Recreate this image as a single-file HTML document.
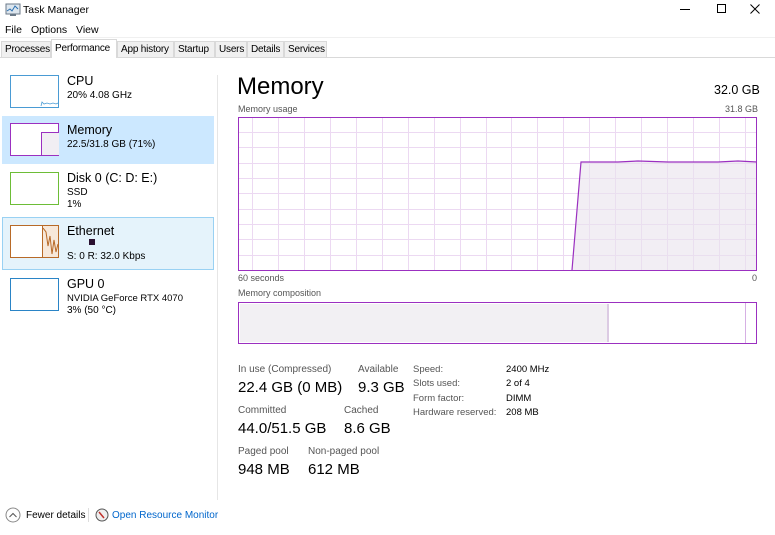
<!DOCTYPE html>
<html><head><meta charset="utf-8"><style>
*{margin:0;padding:0;box-sizing:border-box}
body{width:775px;height:535px;background:#fff;font-family:"Liberation Sans",sans-serif;color:#000;position:relative;overflow:hidden;font-size:10.5px}
.a{position:absolute;white-space:nowrap}
.tab{position:absolute;top:41px;height:16px;border:1px solid #d9d9d9;border-bottom:none;background:#f0f0f0;font-size:10px;padding:2px 0 0 3px;white-space:nowrap;overflow:hidden;letter-spacing:-0.2px}
.big{font-size:15px}
.lbl{font-size:10px;color:#555}
.th{position:absolute;left:10px;width:49px;height:33px;border:1px solid}
</style></head><body>
<svg class="a" style="left:5px;top:3px" width="16" height="14"><rect x="1" y="1" width="14" height="10" fill="#dde6ee" stroke="#6b7a89"/><polyline points="2,8 5,6 7,8 10,3 13,6" fill="none" stroke="#2a6fb0"/><rect x="5" y="11" width="6" height="2" fill="#6b7a89"/></svg>
<div class="a" style="left:23px;top:4px;font-size:10.5px">Task Manager</div>
<div class="a" style="left:680px;top:9px;width:10px;height:1px;background:#000"></div>
<div class="a" style="left:717px;top:4px;width:9px;height:9px;border:1px solid #000"></div>
<svg class="a" style="left:750px;top:4px" width="10" height="10"><path d="M0.5 0.5L9.5 9.5M9.5 0.5L0.5 9.5" stroke="#000"/></svg>
<div class="a" style="left:5px;top:24px">File</div>
<div class="a" style="left:31px;top:24px">Options</div>
<div class="a" style="left:76px;top:24px">View</div>
<div class="a" style="left:0;top:37px;width:775px;height:1px;background:#f0f0f0"></div>
<div class="a" style="left:0;top:57px;width:775px;height:1px;background:#d9d9d9"></div>
<div class="tab" style="left:1px;width:50px">Processes</div>
<div class="tab" style="left:51px;top:39px;height:19px;width:66px;background:#fff;padding-top:3px">Performance</div>
<div class="tab" style="left:117px;width:57px">App history</div>
<div class="tab" style="left:174px;width:41px">Startup</div>
<div class="tab" style="left:215px;width:32px">Users</div>
<div class="tab" style="left:247px;width:37px">Details</div>
<div class="tab" style="left:284px;width:43px">Services</div>

<div class="a" style="left:217px;top:75px;width:1px;height:425px;background:#e6e6e6"></div>
<div class="th" style="top:75px;border-color:#4a9bd4"><svg width="47" height="31"><polyline points="30,30 31,26 33,28 36,27 39,28 42,27 45,28 47,27" fill="none" stroke="#4a9bd4" stroke-width="0.8"/></svg></div>
<div class="a" style="left:67px;top:74px;font-size:12.5px">CPU</div>
<div class="a" style="left:67px;top:90px;font-size:10px">20% 4.08 GHz</div>
<div class="a" style="left:2px;top:116px;width:212px;height:48px;background:#cce8ff"></div>
<div class="th" style="top:123px;border-color:#9b30c0;background:#fff"><div style="position:absolute;left:30px;top:8px;width:18px;height:23px;background:#f1eef3;border-left:1px solid #9b30c0;border-top:1px solid #9b30c0"></div></div>
<div class="a" style="left:67px;top:123px;font-size:12.5px">Memory</div>
<div class="a" style="left:67px;top:139px;font-size:10px">22.5/31.8 GB (71%)</div>
<div class="th" style="top:172px;border-color:#6dbd37"></div>
<div class="a" style="left:67px;top:171px;font-size:12.5px">Disk 0 (C: D: E:)</div>
<div class="a" style="left:67px;top:187px;font-size:10px">SSD</div>
<div class="a" style="left:67px;top:199px;font-size:10px">1%</div>
<div class="a" style="left:2px;top:217px;width:212px;height:53px;background:#e5f3fb;border:1px solid #99d1f3"></div>
<div class="th" style="top:225px;border-color:#b86a28;background:#fff"><div style="position:absolute;left:31px;top:0;width:16px;height:31px;background:#f7e8da;border-left:1px solid #b86a28"></div><svg class="a" style="left:32px;top:0" width="15" height="31"><polyline points="0,2 3,6 5,20 7,10 9,28 11,14 13,26 15,18" fill="none" stroke="#b86a28"/></svg></div>
<div class="a" style="left:67px;top:224px;font-size:12.5px">Ethernet</div>
<div class="a" style="left:89px;top:239px;width:6px;height:6px;background:#2a1030"></div>
<div class="a" style="left:67px;top:251px;font-size:10px">S: 0 R: 32.0 Kbps</div>
<div class="th" style="top:278px;border-color:#2a84c6"></div>
<div class="a" style="left:67px;top:277px;font-size:12.5px">GPU 0</div>
<div class="a" style="left:67px;top:293px;font-size:9.5px">NVIDIA GeForce RTX 4070</div>
<div class="a" style="left:67px;top:305px;font-size:10px">3% (50 °C)</div>

<div class="a" style="left:237px;top:73px;font-size:24px">Memory</div>
<div class="a" style="left:714px;top:83px;font-size:12.5px">32.0 GB</div>
<div class="a lbl" style="left:238px;top:104px;font-size:9px">Memory usage</div>
<div class="a lbl" style="left:725px;top:104px;font-size:9px">31.8 GB</div>
<svg class="a" style="left:238px;top:117px" width="519" height="154">
<g stroke="#ecd9f2" stroke-width="1">
<line x1="0" y1="15.5" x2="519" y2="15.5"/><line x1="0" y1="30.5" x2="519" y2="30.5"/><line x1="0" y1="46.5" x2="519" y2="46.5"/><line x1="0" y1="61.5" x2="519" y2="61.5"/><line x1="0" y1="76.5" x2="519" y2="76.5"/><line x1="0" y1="92.5" x2="519" y2="92.5"/><line x1="0" y1="107.5" x2="519" y2="107.5"/><line x1="0" y1="122.5" x2="519" y2="122.5"/><line x1="0" y1="138.5" x2="519" y2="138.5"/>
<line x1="14.5" y1="0" x2="14.5" y2="154"/><line x1="40.5" y1="0" x2="40.5" y2="154"/><line x1="66.5" y1="0" x2="66.5" y2="154"/><line x1="92.5" y1="0" x2="92.5" y2="154"/><line x1="118.5" y1="0" x2="118.5" y2="154"/><line x1="144.5" y1="0" x2="144.5" y2="154"/><line x1="170.5" y1="0" x2="170.5" y2="154"/><line x1="196.5" y1="0" x2="196.5" y2="154"/><line x1="222.5" y1="0" x2="222.5" y2="154"/><line x1="248.5" y1="0" x2="248.5" y2="154"/><line x1="273.5" y1="0" x2="273.5" y2="154"/><line x1="299.5" y1="0" x2="299.5" y2="154"/><line x1="325.5" y1="0" x2="325.5" y2="154"/><line x1="351.5" y1="0" x2="351.5" y2="154"/><line x1="377.5" y1="0" x2="377.5" y2="154"/><line x1="403.5" y1="0" x2="403.5" y2="154"/><line x1="429.5" y1="0" x2="429.5" y2="154"/><line x1="455.5" y1="0" x2="455.5" y2="154"/><line x1="481.5" y1="0" x2="481.5" y2="154"/><line x1="507.5" y1="0" x2="507.5" y2="154"/>
</g>
<polygon points="334,153 343,45 519,45 519,153" fill="#e9e3ec" fill-opacity="0.6" stroke="none"/>
<polyline points="334,153 343,45 380,45 400,44 430,45 480,45 500,44 519,45" fill="none" stroke="#9b30c0" stroke-width="1.2"/>
<rect x="0.5" y="0.5" width="518" height="153" fill="none" stroke="#9b30c0"/>
</svg>
<div class="a lbl" style="left:238px;top:273px;font-size:9px">60 seconds</div>
<div class="a lbl" style="left:752px;top:273px;font-size:9px">0</div>
<div class="a lbl" style="left:238px;top:288px;font-size:9px">Memory composition</div>
<div class="a" style="left:238px;top:302px;width:519px;height:42px;border:1px solid #9b30c0;background:#fff">
<div class="a" style="left:1px;top:1px;width:369px;height:38px;background:#f2f0f3;border-right:2px solid #dccbe3"></div>
<div class="a" style="left:506px;top:0;width:1px;height:40px;background:#d6b0e4"></div>
</div>

<div class="a lbl" style="left:238px;top:364px">In use (Compressed)</div>
<div class="a big" style="left:238px;top:379px">22.4 GB (0 MB)</div>
<div class="a lbl" style="left:358px;top:364px">Available</div>
<div class="a big" style="left:358px;top:379px">9.3 GB</div>
<div class="a lbl" style="left:238px;top:405px">Committed</div>
<div class="a big" style="left:238px;top:420px">44.0/51.5 GB</div>
<div class="a lbl" style="left:344px;top:405px">Cached</div>
<div class="a big" style="left:344px;top:420px">8.6 GB</div>
<div class="a lbl" style="left:238px;top:446px">Paged pool</div>
<div class="a big" style="left:238px;top:461px">948 MB</div>
<div class="a lbl" style="left:308px;top:446px">Non-paged pool</div>
<div class="a big" style="left:308px;top:461px">612 MB</div>
<div class="a lbl" style="left:413px;top:364px;font-size:9.5px">Speed:</div>
<div class="a lbl" style="left:413px;top:378px;font-size:9.5px">Slots used:</div>
<div class="a lbl" style="left:413px;top:393px;font-size:9.5px">Form factor:</div>
<div class="a lbl" style="left:413px;top:407px;font-size:9.5px">Hardware reserved:</div>
<div class="a" style="left:506px;top:364px;font-size:9.5px">2400 MHz</div>
<div class="a" style="left:506px;top:378px;font-size:9.5px">2 of 4</div>
<div class="a" style="left:506px;top:393px;font-size:9.5px">DIMM</div>
<div class="a" style="left:506px;top:407px;font-size:9.5px">208 MB</div>

<svg class="a" style="left:5px;top:507px" width="16" height="16"><circle cx="8" cy="8" r="7" fill="none" stroke="#888"/><polyline points="4.5,10 8,6.5 11.5,10" fill="none" stroke="#555"/></svg>
<div class="a" style="left:26px;top:510px;font-size:10px">Fewer details</div>
<div class="a" style="left:88px;top:508px;width:1px;height:14px;background:#ddd"></div>
<svg class="a" style="left:95px;top:508px" width="14" height="14"><circle cx="7" cy="7" r="6" fill="#eee" stroke="#555"/><line x1="4" y1="4" x2="9" y2="10" stroke="#c0302a" stroke-width="1.5"/></svg>
<div class="a" style="left:112px;top:510px;font-size:10px;color:#0066cc">Open Resource Monitor</div>
</body></html>
